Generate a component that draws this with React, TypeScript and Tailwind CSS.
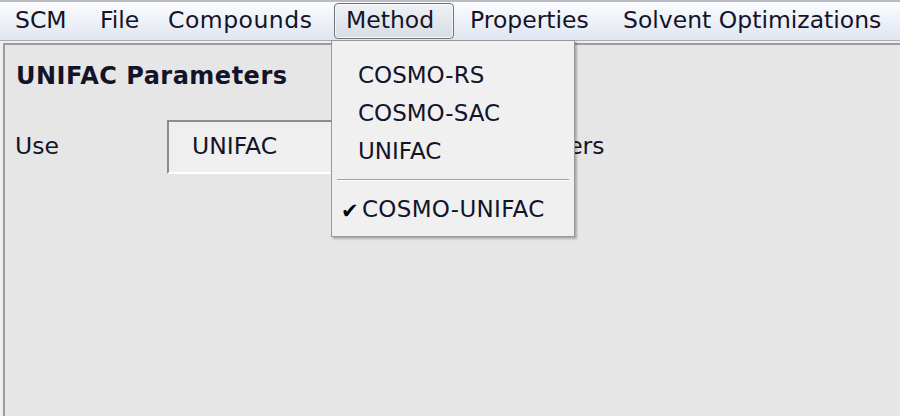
const FONT = { fontFamily: '"DejaVu Sans", Verdana, sans-serif' }

function MenuBar() {
  return (
    <div className="h-[41px] border-t-2 border-t-[#b9bcc2] border-b border-b-[#a9acb1] bg-gradient-to-b from-[#fbfcfe] to-[#dfe6f2] flex items-center text-[23.5px] text-[#141428] whitespace-nowrap">
      <div className="w-[85px] pl-[15px]">SCM</div>
      <div className="w-[69px] pl-[15px]">File</div>
      <div className="w-[180px] pl-[14px] tracking-[0.5px]">Compounds</div>
      <div className="w-[120px] h-[36px] pl-[11px] flex items-center rounded-[4px] border border-[#6e7379] bg-gradient-to-b from-[#eef1f6] to-[#d8dde5] shadow-[inset_0_0_0_1px_#f6f8fb]">
        Method
      </div>
      <div className="w-[154px] pl-[16px]">Properties</div>
      <div className="pl-[15px]">Solvent Optimizations</div>
    </div>
  )
}

function MethodMenu() {
  const items = ['COSMO-RS', 'COSMO-SAC', 'UNIFAC']
  return (
    <div className="absolute left-[331px] top-[40px] w-[244px] h-[197px] bg-[#f0f0f0] border border-[#979797] shadow-[2px_2px_2px_rgba(0,0,0,0.25)] text-[23px] text-[#141428] whitespace-nowrap">
      <div className="pt-[15px] flex flex-col">
        {items.map(item => (
          <div key={item} className="h-[38px] pl-[26px] flex items-center">
            {item}
          </div>
        ))}
      </div>
      <div className="mx-[5px] mt-[9px] h-[2px] border-t border-t-[#a0a0a0] border-b border-b-white" />
      <div className="h-[58px] pl-[9px] flex items-center gap-[4px] pb-[2px]">
        <span className="w-[17px] text-[21px] leading-none mt-[5px] text-black">✔</span>
        <span className="tracking-[0.3px]">COSMO-UNIFAC</span>
      </div>
    </div>
  )
}

export default function App() {
  return (
    <div className="relative w-[900px] h-[416px] overflow-hidden bg-[#eeeeee]" style={FONT}>
      <MenuBar />
      <div className="pl-[3px] pt-[2px] h-[375px]">
        <div className="h-full border-t-2 border-l-2 border-[#9c9c9c] bg-[#e6e6e6] text-[23.5px] text-[#141428] whitespace-nowrap">
          <div className="pl-[11px] pt-[13px] font-bold text-[24px] tracking-[0.5px]">UNIFAC Parameters</div>
          <div className="mt-[26px] flex items-center">
            <div className="w-[162px] pl-[10px]">Use</div>
            <div className="w-[300px] h-[54px] border-t-2 border-l-2 border-t-[#8c8c8c] border-l-[#8c8c8c] border-b-2 border-b-white bg-[#efefef] pl-[23px] flex items-center">
              UNIFAC
            </div>
            <div className="pl-[3px]">Parameters</div>
          </div>
        </div>
      </div>
      <MethodMenu />
    </div>
  )
}
